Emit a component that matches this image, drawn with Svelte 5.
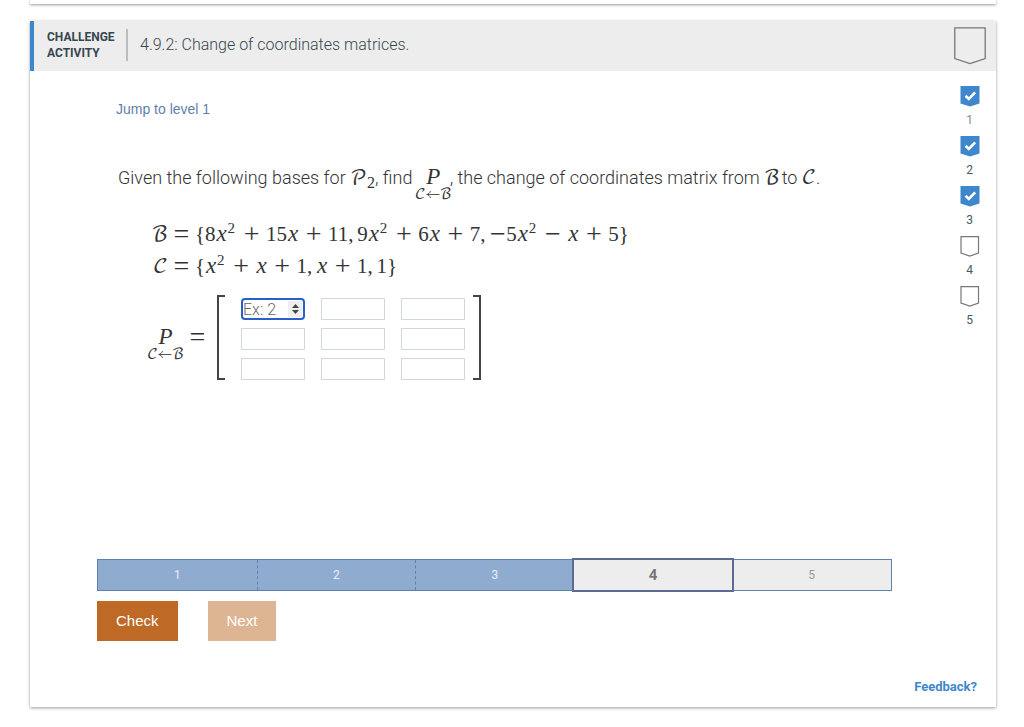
<script>
  const levels = [
    { n: 1, done: true, faded: true },
    { n: 2, done: true },
    { n: 3, done: true },
    { n: 4, done: false },
    { n: 5, done: false }
  ];
  const current = 4;

  // Token kinds: c = script capital, r = relation, o = binary operator, u = sign,
  // v = variable, s = superscript, p = comma, n = number or bracket
  const basisB = [
    ['c', 'ℬ'], ['r', '='], ['n', '{8'], ['v', 'x'], ['s', '2'], ['o', '+'], ['n', '15'], ['v', 'x'],
    ['o', '+'], ['n', '11'], ['p', ','], ['n', '9'], ['v', 'x'], ['s', '2'], ['o', '+'], ['n', '6'],
    ['v', 'x'], ['o', '+'], ['n', '7'], ['p', ','], ['u', '−'], ['n', '5'], ['v', 'x'], ['s', '2'],
    ['o', '−'], ['v', 'x'], ['o', '+'], ['n', '5}']
  ];
  const basisC = [
    ['c', '𝒞'], ['r', '='], ['n', '{'], ['v', 'x'], ['s', '2'], ['o', '+'], ['v', 'x'], ['o', '+'],
    ['n', '1'], ['p', ','], ['v', 'x'], ['o', '+'], ['n', '1'], ['p', ','], ['n', '1}']
  ];

  let cells = $state(Array(9).fill(''));

  function step(by) {
    cells[0] = String((Number(cells[0]) || 0) + by);
  }
</script>

{#snippet transition()}
  <span class="stack"><i class="cap">P</i><span class="under"><span class="cal">𝒞</span><svg width="14" height="9" viewBox="0 0 14 9" aria-label="from"><path d="M13.500 4.500H1M4.500 1C4 3 2.500 4.200.700 4.500 2.500 4.800 4 6 4.500 8" fill="none" stroke="#444" stroke-width=".9" /></svg><span class="cal">ℬ</span></span></span>
{/snippet}

<div class="page">
<div class="previous"></div>
<main class="card">
  <header>
    <strong>CHALLENGE ACTIVITY</strong>
    <h1>4.9.2: Change of coordinates matrices.</h1>
    <svg width="32" height="38" viewBox="0 0 32 38" aria-hidden="true">
      <path d="M.8.800H31.200V31.500L16 36.500.800 31.500Z" fill="none" stroke="#777" stroke-width="1.300" />
    </svg>
  </header>

  <div class="body">
    <section class="content">
      <a class="jump" href="#level-1">Jump to level 1</a>

      <div class="problem">
        <p class="statement">Given the following bases for <span class="cal">𝒫</span><sub>2</sub>, find {@render transition()}, the change of coordinates matrix from<span class="cal sym">ℬ</span>to<span class="cal sym last">𝒞</span>.</p>

        <div class="bases">
          {#each [basisB, basisC] as line}
            <div class="math">
              {#each line as [kind, text]}<span class={kind}>{text}</span>{/each}
            </div>
          {/each}
        </div>

        <div class="answer">
          <div class="math lhs">{@render transition()}<span class="r">=</span></div>
          <div class="matrix">
            {#each cells as _, i}
              <div class="cell">
                <input type="text" inputmode="numeric" class:active={i === 0}
                  aria-label="Row {Math.floor(i / 3) + 1}, column {(i % 3) + 1}"
                  placeholder={i === 0 ? 'Ex: 2' : ''} bind:value={cells[i]} />
                {#if i === 0}
                  <div class="stepper">
                    <button type="button" aria-label="Increase" onclick={() => step(1)}>
                      <svg width="7" height="4" viewBox="0 0 7 4"><path d="M3.500 0 7 4H0Z" fill="#444" /></svg>
                    </button>
                    <button type="button" aria-label="Decrease" onclick={() => step(-1)}>
                      <svg width="7" height="4" viewBox="0 0 7 4"><path d="M3.500 4 7 0H0Z" fill="#444" /></svg>
                    </button>
                  </div>
                {/if}
              </div>
            {/each}
          </div>
        </div>
      </div>

      <div class="bar">
        {#each levels as l}
          <div class="segment" class:done={l.done} class:current={l.n === current}>{l.n}</div>
        {/each}
      </div>

      <div class="actions">
        <button type="button" class="check">Check</button>
        <button type="button" class="check" disabled>Next</button>
      </div>
    </section>

    <aside>
      <ol>
        {#each levels as l}
          <li class:faded={l.faded}>
            <svg width="20" height="21" viewBox="0 0 20 21" aria-hidden="true">
              {#if l.done}
                <path d="M.500 0H19.500V17.500L10 20.500.500 17.500Z" fill="#3f87cc" />
                <path d="M5.500 9.800 8.800 13 15.200 6.300" fill="none" stroke="#fff" stroke-width="2.600" />
              {:else}
                <path d="M1 .700H18.500V17L9.800 20 1 17Z" fill="none" stroke="#777" stroke-width="1.200" />
              {/if}
            </svg>
            <span>{l.n}</span>
          </li>
        {/each}
      </ol>
    </aside>
  </div>

  <footer><a href="#feedback">Feedback?</a></footer>
</main>
</div>

<style>
  :global(body) {
    margin: 0;
    background: #fff;
    color: #37474f;
    font-family: Roboto, sans-serif;
  }

  .page {
    padding: 0 28px 20px 30px;
  }

  .previous,
  .card {
    background: #fff;
    box-shadow: 0 1px 3px rgba(0, 0, 0, 0.4);
  }

  .previous {
    height: 4px;
    margin-bottom: 17px;
  }

  header {
    display: flex;
    align-items: center;
    height: 50px;
    padding-right: 10px;
    border-left: 4px solid #3f87cc;
    background: #ededed;
  }

  header strong {
    width: 67px;
    padding: 0 0 2px 13px;
    font-size: 12px;
    line-height: 16px;
    font-weight: 700;
  }

  header h1 {
    flex: 1;
    margin: 0 0 2px 12px;
    padding-left: 12px;
    border-left: 2px solid #bdbdbd;
    font-size: 16px;
    line-height: 32px;
    font-weight: 300;
  }

  .body {
    display: flex;
  }

  .content {
    flex: 1;
    min-width: 0;
    padding: 28px 51px 0 67px;
  }

  .jump {
    display: block;
    margin-left: 19px;
    color: #5f7fab;
    font: 14px/20px "Liberation Sans", sans-serif;
    text-decoration: none;
  }

  .problem {
    margin-left: 21px;
    color: #333;
  }

  .statement {
    margin: 46px 0 0;
    font-size: 18px;
    line-height: 26px;
    font-weight: 300;
  }

  .statement sub {
    font: 16px/1 "Liberation Serif", serif;
    vertical-align: -4px;
  }

  .cal,
  .c {
    font-family: "DejaVu Math TeX Gyre", "DejaVu Serif", serif;
    font-weight: 400;
    line-height: 1;
  }

  .statement > .cal {
    font-size: 20px;
  }

  .sym {
    margin: 0 2px 0 4px;
  }

  .last {
    margin-right: 0;
  }

  .stack {
    display: inline-flex;
    flex-direction: column;
    align-items: center;
    margin: 0 -2px;
  }

  .cap {
    font: italic 23px/22px "Liberation Serif", serif;
  }

  .under {
    display: flex;
    align-items: center;
    height: 12px;
    font-size: 15px;
  }

  .bases {
    margin: 18px 0 0 32px;
  }

  .math {
    display: flex;
    align-items: baseline;
    font: 21px/31px "Liberation Serif", serif;
  }

  .c {
    width: 18px;
    text-align: right;
  }

  .r,
  .o,
  .u {
    position: relative;
    top: 2px;
    width: 17px;
    text-align: center;
    font-size: 28px;
    line-height: 1;
  }

  .r {
    margin: 0 5px;
  }

  .o {
    margin: 0 6px;
  }

  .v {
    width: 12px;
    text-align: center;
    font-size: 23px;
    font-style: italic;
  }

  .s {
    margin-right: 2px;
    font-size: 15px;
    line-height: 1;
    position: relative;
    top: -8px;
  }

  .p {
    width: 9px;
  }

  .answer {
    display: flex;
    align-items: center;
    margin: 13px 0 0 29px;
  }

  .lhs {
    width: 70px;
    padding-top: 6px;
  }

  .lhs .stack {
    margin: 0;
  }

  .matrix {
    display: grid;
    grid-template-columns: repeat(3, 64px);
    gap: 8px 16px;
    padding: 3px 16px 0 24px;
    height: 82px;
    background:
      linear-gradient(#444, #444) left / 2px 100% no-repeat,
      linear-gradient(#444, #444) left top / 8px 2px no-repeat,
      linear-gradient(#444, #444) left bottom / 8px 2px no-repeat,
      linear-gradient(#444, #444) right / 2px 100% no-repeat,
      linear-gradient(#444, #444) right top / 8px 2px no-repeat,
      linear-gradient(#444, #444) right bottom / 8px 2px no-repeat;
  }

  .cell {
    position: relative;
    height: 22px;
  }

  .cell input {
    display: block;
    box-sizing: border-box;
    width: 100%;
    height: 22px;
    padding: 0;
    border: 1px solid #cfd8dc;
    background: #fff;
    font: 300 16px/20px Roboto, sans-serif;
    color: #37474f;
    outline: none;
  }

  .cell input.active {
    border: 2px solid #2a5fcb;
    border-radius: 4px;
  }

  .cell input::placeholder {
    color: #666;
    opacity: 1;
  }

  .stepper {
    position: absolute;
    top: 3px;
    right: 3px;
    display: flex;
    flex-direction: column;
    justify-content: center;
    gap: 2px;
    width: 14px;
    height: 16px;
    background: #efefef;
  }

  .stepper button {
    display: flex;
    justify-content: center;
    padding: 0;
    border: 0;
    background: none;
  }

  .bar {
    display: grid;
    grid-template-columns: repeat(5, 1fr);
    margin: 179px -1px 0 0;
    border: 1px solid #5f82ad;
    background: #ededed;
  }

  .segment {
    height: 30px;
    color: #999;
    font-size: 12px;
    line-height: 30px;
    text-align: center;
  }

  .segment.done {
    background: #90abd0;
    color: #e8eef6;
  }

  .segment.done + .segment.done {
    border-left: 1px dashed #5f82ad;
  }

  .segment.current {
    margin: -2px;
    border: 2px solid #5b6c94;
    background: #ededed;
    color: #777;
    font-size: 15px;
    font-weight: 700;
  }

  .actions {
    display: flex;
    gap: 30px;
    margin-top: 10px;
  }

  .check {
    height: 40px;
    padding: 0 19px 1px;
    border: 0;
    background: #be6a26;
    color: #fff;
    font: 15px "Liberation Sans", sans-serif;
  }

  .check:disabled {
    background: #deb592;
  }

  aside {
    width: 54px;
  }

  ol {
    margin: 0;
    padding: 15px 0 0 1px;
    list-style: none;
  }

  li {
    display: flex;
    flex-direction: column;
    align-items: center;
    gap: 5px;
    height: 50px;
    color: #455a64;
    font-size: 12px;
    line-height: 16px;
  }

  .faded {
    color: #8a8a8a;
  }

  footer {
    padding: 36px 19px 10px;
    text-align: right;
    font-size: 13px;
    line-height: 20px;
    font-weight: 700;
  }

  footer a {
    color: #3f87cc;
    text-decoration: none;
  }
</style>
